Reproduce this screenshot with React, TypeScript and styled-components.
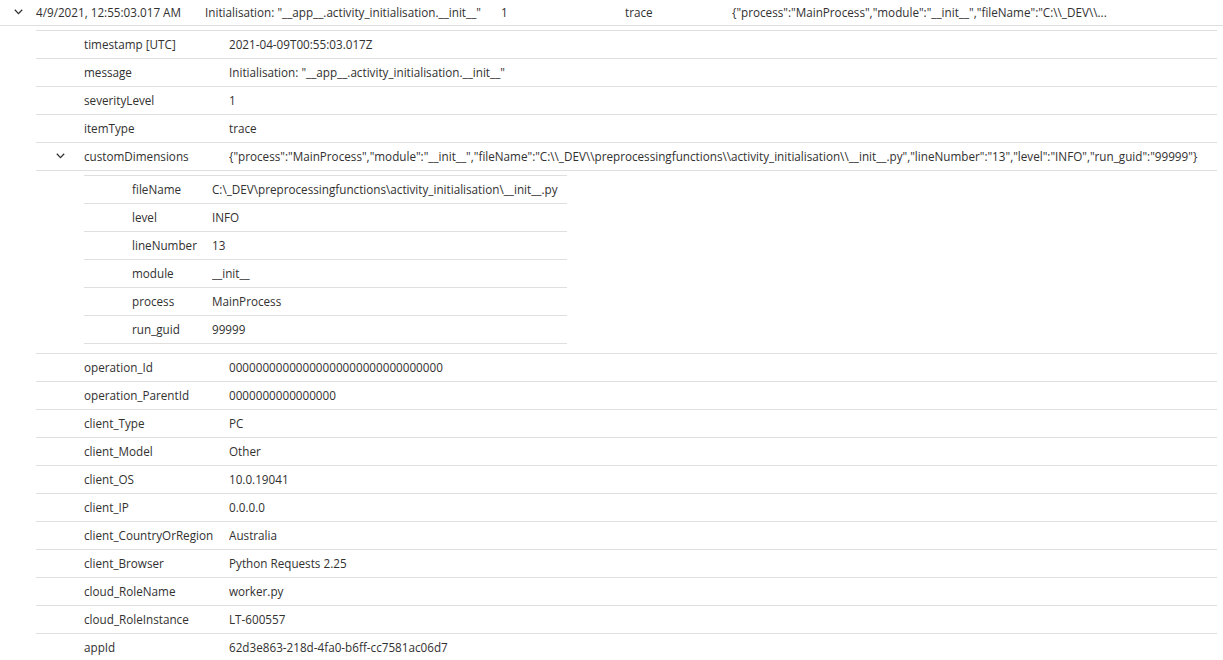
import styled, { createGlobalStyle } from "styled-components";

const GlobalStyle = createGlobalStyle`
  body {
    margin: 0;
    background: #fff;
    color: #323130;
    font-family: "Segoe UI", "Open Sans", "Liberation Sans", sans-serif;
    font-size: 11.7px;
  }
`;

const Page = styled.div`
  width: 1223px;
`;

const HeaderRow = styled.div`
  display: flex;
  align-items: center;
  height: 23px;
  padding-bottom: 2px;
  border-bottom: 1px solid #e1dfdd;
  white-space: nowrap;
`;

const Cell = styled.div<{ $w?: number }>`
  flex: ${(p) => (p.$w ? `0 0 ${p.$w}px` : "1 1 auto")};
  overflow: hidden;
  display: flex;
  align-items: center;
`;

const ChevronCell = styled(Cell)`
  justify-content: center;
  padding-top: 1px;
`;

const DetailPanel = styled.div`
  margin: 4px 6px 0 36px;
  border-top: 1px solid #e1dfdd;
`;

const PropRow = styled.div<{ $label: number }>`
  display: grid;
  grid-template-columns: 48px ${(p) => p.$label}px 1fr;
  align-items: center;
  height: 25px;
  padding-bottom: 2px;
  border-bottom: 1px solid #e1dfdd;
  white-space: nowrap;
`;

const Toggle = styled.div`
  display: flex;
  justify-content: center;
  padding-top: 1px;
`;

const PropLabel = styled.div``;

const PropValue = styled.div`
  overflow: hidden;
`;

const NestedWrap = styled.div`
  padding: 4px 0 9px 48px;
  border-bottom: 1px solid #e1dfdd;
`;

const NestedTable = styled.div`
  width: 483px;
  border-top: 1px solid #e1dfdd;
`;

function Chevron() {
  return (
    <svg width="9" height="6" viewBox="0 0 9 6">
      <path d="M0.8 0.8 L4.5 4.6 L8.2 0.8" fill="none" stroke="#323130" strokeWidth="1.3" />
    </svg>
  );
}

const details: [string, string][] = [
  ["timestamp [UTC]", "2021-04-09T00:55:03.017Z"],
  ["message", 'Initialisation: "__app__.activity_initialisation.__init__"'],
  ["severityLevel", "1"],
  ["itemType", "trace"],
];

const custom: [string, string][] = [
  ["fileName", "C:\\_DEV\\preprocessingfunctions\\activity_initialisation\\__init__.py"],
  ["level", "INFO"],
  ["lineNumber", "13"],
  ["module", "__init__"],
  ["process", "MainProcess"],
  ["run_guid", "99999"],
];

const rest: [string, string][] = [
  ["operation_Id", "00000000000000000000000000000000"],
  ["operation_ParentId", "0000000000000000"],
  ["client_Type", "PC"],
  ["client_Model", "Other"],
  ["client_OS", "10.0.19041"],
  ["client_IP", "0.0.0.0"],
  ["client_CountryOrRegion", "Australia"],
  ["client_Browser", "Python Requests 2.25"],
  ["cloud_RoleName", "worker.py"],
  ["cloud_RoleInstance", "LT-600557"],
  ["appId", "62d3e863-218d-4fa0-b6ff-cc7581ac06d7"],
];

const customJson =
  '{"process":"MainProcess","module":"__init__","fileName":"C:\\\\_DEV\\\\preprocessingfunctions\\\\activity_initialisation\\\\__init__.py","lineNumber":"13","level":"INFO","run_guid":"99999"}';

export default function App() {
  return (
    <Page>
      <GlobalStyle />
      <HeaderRow>
        <ChevronCell $w={36}>
          <Chevron />
        </ChevronCell>
        <Cell $w={169}>4/9/2021, 12:55:03.017 AM</Cell>
        <Cell $w={296}>Initialisation: "__app__.activity_initialisation.__init__"</Cell>
        <Cell $w={124}>1</Cell>
        <Cell $w={107}>trace</Cell>
        <Cell>{'{"process":"MainProcess","module":"__init__","fileName":"C:\\\\_DEV\\\\...'}</Cell>
      </HeaderRow>
      <DetailPanel>
        {details.map(([k, v]) => (
          <PropRow key={k} $label={145}>
            <span />
            <PropLabel>{k}</PropLabel>
            <PropValue>{v}</PropValue>
          </PropRow>
        ))}
        <PropRow $label={145}>
          <Toggle>
            <Chevron />
          </Toggle>
          <PropLabel>customDimensions</PropLabel>
          <PropValue>{customJson}</PropValue>
        </PropRow>
        <NestedWrap>
          <NestedTable>
            {custom.map(([k, v]) => (
              <PropRow key={k} $label={80}>
                <span />
                <PropLabel>{k}</PropLabel>
                <PropValue>{v}</PropValue>
              </PropRow>
            ))}
          </NestedTable>
        </NestedWrap>
        {rest.map(([k, v]) => (
          <PropRow key={k} $label={145}>
            <span />
            <PropLabel>{k}</PropLabel>
            <PropValue>{v}</PropValue>
          </PropRow>
        ))}
      </DetailPanel>
    </Page>
  );
}
